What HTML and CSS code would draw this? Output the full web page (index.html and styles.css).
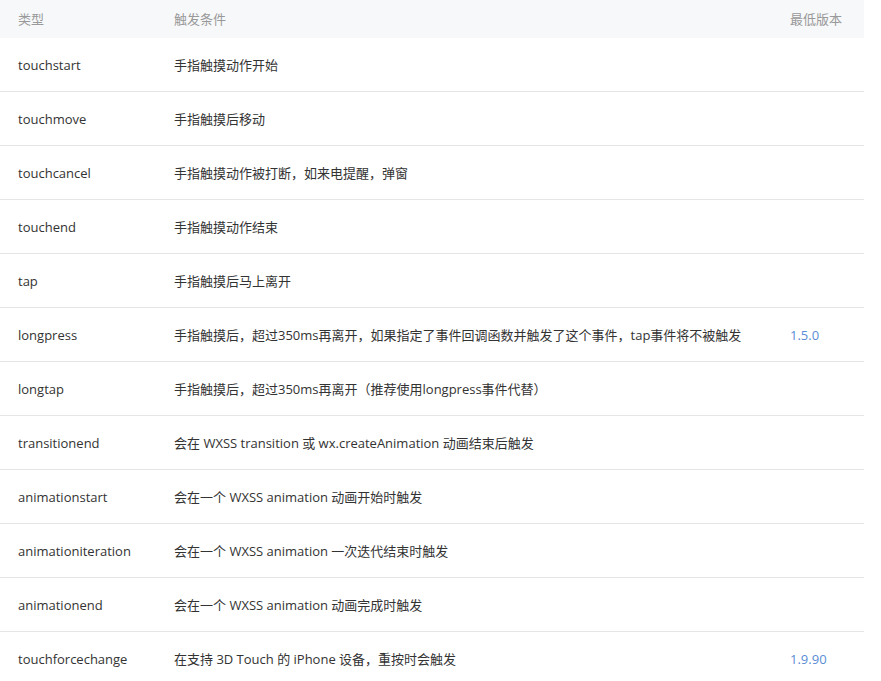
FILE: index.html
```html
<!DOCTYPE html>
<html lang="zh-CN">
<head>
<meta charset="utf-8">
<title>事件类型</title>
<link rel="stylesheet" href="styles.css">
</head>
<body>
<table class="events">
  <colgroup>
    <col class="c-type">
    <col class="c-cond">
    <col class="c-ver">
  </colgroup>
  <thead>
    <tr><th>类型</th><th>触发条件</th><th>最低版本</th></tr>
  </thead>
  <tbody>
    <tr><td>touchstart</td><td>手指触摸动作开始</td><td></td></tr>
    <tr><td>touchmove</td><td>手指触摸后移动</td><td></td></tr>
    <tr><td>touchcancel</td><td>手指触摸动作被打断，如来电提醒，弹窗</td><td></td></tr>
    <tr><td>touchend</td><td>手指触摸动作结束</td><td></td></tr>
    <tr><td>tap</td><td>手指触摸后马上离开</td><td></td></tr>
    <tr><td>longpress</td><td>手指触摸后，超过350ms再离开，如果指定了事件回调函数并触发了这个事件，tap事件将不被触发</td><td><a class="ver" href="#">1.5.0</a></td></tr>
    <tr><td>longtap</td><td>手指触摸后，超过350ms再离开（推荐使用longpress事件代替）</td><td></td></tr>
    <tr><td>transitionend</td><td>会在 WXSS transition 或 wx.createAnimation 动画结束后触发</td><td></td></tr>
    <tr><td>animationstart</td><td>会在一个 WXSS animation 动画开始时触发</td><td></td></tr>
    <tr><td>animationiteration</td><td>会在一个 WXSS animation 一次迭代结束时触发</td><td></td></tr>
    <tr><td>animationend</td><td>会在一个 WXSS animation 动画完成时触发</td><td></td></tr>
    <tr><td>touchforcechange</td><td>在支持 3D Touch 的 iPhone 设备，重按时会触发</td><td><a class="ver" href="#">1.9.90</a></td></tr>
  </tbody>
</table>
</body>
</html>
```

FILE: styles.css
```css
html, body {
  margin: 0;
  padding: 0;
  background: #ffffff;
}
body {
  font-family: "Open Sans", "Noto Sans CJK SC", sans-serif;
  font-size: 13px;
  color: #333333;
}
.events {
  width: 864px;
  border-collapse: collapse;
  table-layout: fixed;
}
.c-type { width: 156px; }
.c-cond { width: 616px; }
.c-ver { width: 92px; }
.events th {
  height: 37px;
  padding: 0 0 1px 18px;
  text-align: left;
  font-weight: normal;
  color: #999999;
  background: #f7f8fa;
  vertical-align: middle;
}
.events td {
  height: 53px;
  padding: 0 0 0 18px;
  text-align: left;
  vertical-align: middle;
  border-bottom: 1px solid #e5e5e5;
  white-space: nowrap;
}
.events tbody tr:last-child td {
  border-bottom: none;
}
.ver {
  color: #5a8dd6;
  text-decoration: none;
}
```
